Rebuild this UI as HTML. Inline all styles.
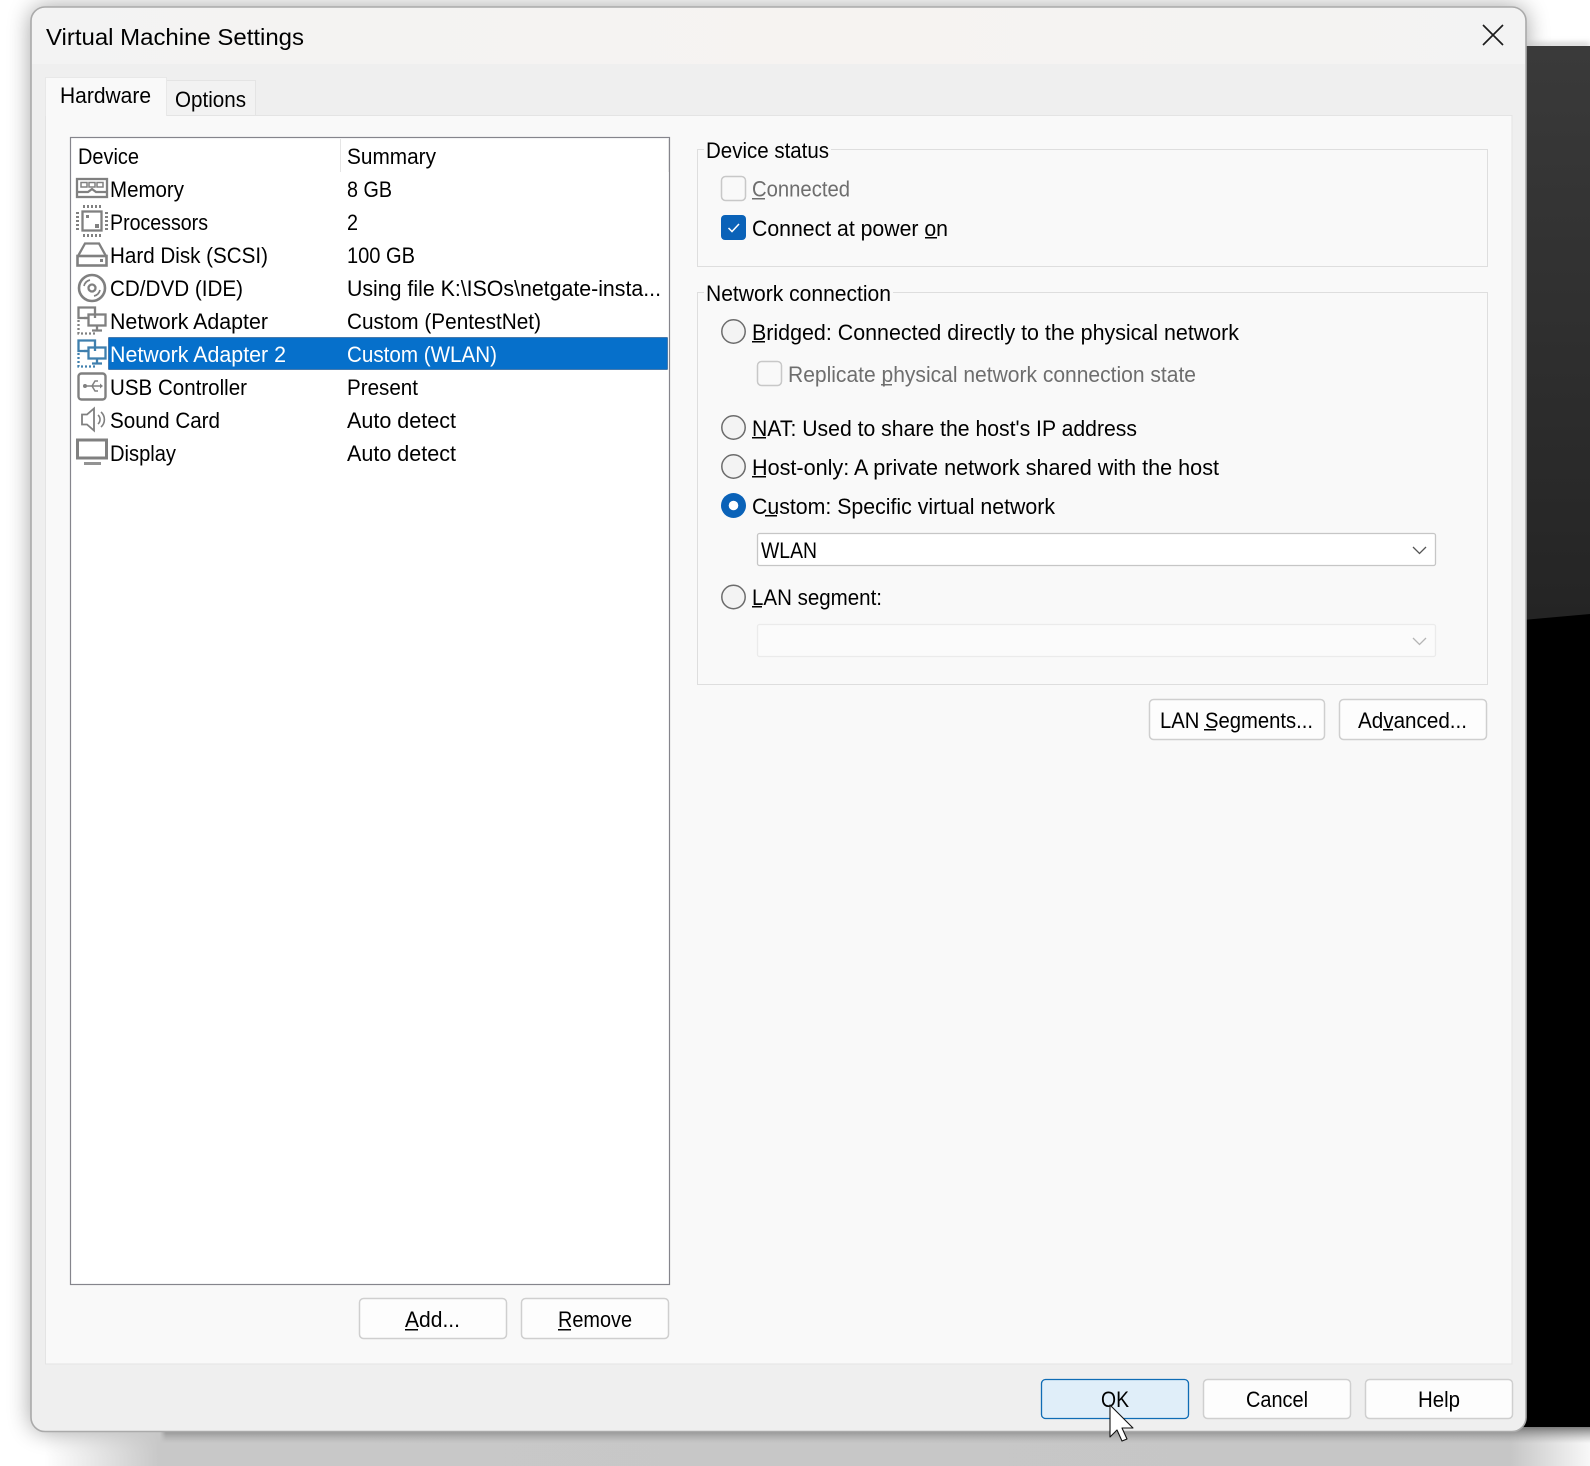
<!DOCTYPE html>
<html><head><meta charset="utf-8"><title>Virtual Machine Settings</title>
<style>
html,body{margin:0;padding:0;background:#fff;width:1590px;height:1466px;overflow:hidden}
svg{display:block}
text{font-family:"Liberation Sans",sans-serif;font-size:22px;fill:#000}
.d{fill:#6e6e6e}
.w{fill:#fff}
.btn{fill:#fdfdfd;stroke:#cfcfcf;stroke-width:1.5}
.ic{fill:none;stroke:#808080;stroke-width:2.3}
.icb{fill:none;stroke:#3f7fae;stroke-width:2.3}
.f{fill:#808080}
</style></head><body>
<svg width="1590" height="1466" viewBox="0 0 1590 1466" xmlns="http://www.w3.org/2000/svg">
<defs>
<filter id="b1" filterUnits="userSpaceOnUse" x="0" y="0" width="1590" height="1466"><feGaussianBlur stdDeviation="12"/></filter>
<filter id="b2" filterUnits="userSpaceOnUse" x="0" y="0" width="1590" height="1466"><feGaussianBlur stdDeviation="3"/></filter>
<linearGradient id="dk" x1="0" y1="0" x2="0" y2="1"><stop offset="0" stop-color="#3a3a3a"/><stop offset="1" stop-color="#242424"/></linearGradient>
<linearGradient id="band" x1="0" y1="0" x2="0" y2="1"><stop offset="0" stop-color="#6e6e6e" stop-opacity=".9"/><stop offset="1" stop-color="#999" stop-opacity="0"/></linearGradient>
<linearGradient id="under" gradientUnits="userSpaceOnUse" x1="0" y1="0" x2="1590" y2="0"><stop offset=".028" stop-color="#c8c8c8" stop-opacity="0"/><stop offset=".1" stop-color="#c8c8c8"/><stop offset=".95" stop-color="#c6c6c6"/><stop offset="1" stop-color="#f8f8f8"/></linearGradient>
<mask id="bm" maskUnits="userSpaceOnUse" x="100" y="1420" width="1490" height="40"><rect x="100" y="1420" width="120" height="40" fill="url(#mk)"/><rect x="220" y="1420" width="1370" height="40" fill="#fff"/></mask>
<linearGradient id="mk" x1="0" y1="0" x2="1" y2="0"><stop offset="0" stop-color="#000"/><stop offset=".5" stop-color="#000"/><stop offset=".55" stop-color="#fff"/></linearGradient>
<linearGradient id="tb" x1="0" y1="0" x2="1" y2="0"><stop offset="0" stop-color="#f3f3f3"/><stop offset=".55" stop-color="#f6f3f1"/><stop offset="1" stop-color="#f3f3f3"/></linearGradient>
<clipPath id="win"><rect x="31" y="7" width="1495" height="1424.500" rx="14"/></clipPath>
</defs>

<!-- backdrop -->
<rect width="1590" height="1466" fill="#fff"/>
<rect x="31" y="7" width="1495" height="1424" rx="14" fill="#000" opacity=".38" filter="url(#b1)"/>
<rect x="0" y="1420" width="1590" height="46" fill="url(#under)"/>
<rect x="100" y="1427" width="1490" height="16" fill="url(#band)" mask="url(#bm)"/>
<!-- dark window behind -->
<rect x="1500" y="43" width="90" height="4" fill="#c4c4c4" filter="url(#b2)"/>
<rect x="1500" y="46" width="90" height="1381" fill="#000"/>
<path d="M1500 46H1590V614L1500 622Z" fill="url(#dk)"/>

<!-- window -->
<rect x="31" y="7" width="1495" height="1424.500" rx="14" fill="#efefef"/>
<g clip-path="url(#win)"><rect x="31" y="7" width="1495" height="57" fill="url(#tb)"/></g>
<rect x="31" y="7" width="1495" height="1424.500" rx="14" fill="none" stroke="#aaaaaa" stroke-width="1.600"/>

<text x="46" y="45" style="font-size:23px" textLength="258" lengthAdjust="spacingAndGlyphs">Virtual Machine Settings</text>
<path d="M1483 25L1503 45M1503 25L1483 45" stroke="#1c1c1c" stroke-width="1.700" fill="none"/>

<!-- tabs & panel -->
<rect x="166.500" y="80.500" width="89" height="40" fill="#f2f2f2" stroke="#e4e4e4"/>
<rect x="45.500" y="115.500" width="1466.500" height="1248.500" fill="#f9f9f9" stroke="#e4e4e4"/>
<path d="M45.500 116V77.500H166.500V116" fill="#f9f9f9" stroke="#e8e8e8"/>
<rect x="46" y="112" width="120" height="6" fill="#f9f9f9"/>
<text x="60" y="103" textLength="91" lengthAdjust="spacingAndGlyphs">Hardware</text>
<text x="175" y="107" textLength="71" lengthAdjust="spacingAndGlyphs">Options</text>

<!-- list -->
<rect x="70.500" y="137.500" width="599" height="1147" fill="#fff" stroke="#85858c" stroke-width="1.200"/>
<rect x="340" y="139" width="1" height="33" fill="#e5e5e5"/>
<rect x="668" y="139" width="1" height="33" fill="#e5e5e5"/>
<text x="78" y="164" textLength="61" lengthAdjust="spacingAndGlyphs">Device</text>
<text x="347" y="164" textLength="89" lengthAdjust="spacingAndGlyphs">Summary</text>

<rect x="108.500" y="337.500" width="559" height="32" fill="#0670cb" stroke="#0b3f78" stroke-dasharray="1 1"/>

<text x="110" y="197" textLength="74" lengthAdjust="spacingAndGlyphs">Memory</text>
<text x="347" y="197" textLength="45" lengthAdjust="spacingAndGlyphs">8 GB</text>
<text x="110" y="230" textLength="98" lengthAdjust="spacingAndGlyphs">Processors</text>
<text x="347" y="230" textLength="11" lengthAdjust="spacingAndGlyphs">2</text>
<text x="110" y="263" textLength="158" lengthAdjust="spacingAndGlyphs">Hard Disk (SCSI)</text>
<text x="347" y="263" textLength="68" lengthAdjust="spacingAndGlyphs">100 GB</text>
<text x="110" y="296" textLength="133" lengthAdjust="spacingAndGlyphs">CD/DVD (IDE)</text>
<text x="347" y="296" textLength="314" lengthAdjust="spacingAndGlyphs">Using file K:\ISOs\netgate-insta...</text>
<text x="110" y="329" textLength="158" lengthAdjust="spacingAndGlyphs">Network Adapter</text>
<text x="347" y="329" textLength="194" lengthAdjust="spacingAndGlyphs">Custom (PentestNet)</text>
<text x="110" y="362" class="w" textLength="176" lengthAdjust="spacingAndGlyphs">Network Adapter 2</text>
<text x="347" y="362" class="w" textLength="150" lengthAdjust="spacingAndGlyphs">Custom (WLAN)</text>
<text x="110" y="395" textLength="137" lengthAdjust="spacingAndGlyphs">USB Controller</text>
<text x="347" y="395" textLength="71" lengthAdjust="spacingAndGlyphs">Present</text>
<text x="110" y="428" textLength="110" lengthAdjust="spacingAndGlyphs">Sound Card</text>
<text x="347" y="428" textLength="109" lengthAdjust="spacingAndGlyphs">Auto detect</text>
<text x="110" y="461" textLength="66" lengthAdjust="spacingAndGlyphs">Display</text>
<text x="347" y="461" textLength="109" lengthAdjust="spacingAndGlyphs">Auto detect</text>

<!-- icons -->
<!-- memory -->
<rect x="77" y="179" width="30" height="18" class="ic"/>
<path d="M77 192H88L92 189L96 192H107" class="ic"/>
<rect x="81" y="182.500" width="6" height="4.500" class="ic" style="stroke-width:1.500"/><rect x="89" y="182.500" width="6" height="4.500" class="ic" style="stroke-width:1.500"/><rect x="97" y="182.500" width="6" height="4.500" class="ic" style="stroke-width:1.500"/>
<!-- cpu -->
<rect x="82.500" y="211.500" width="19" height="19" class="ic"/>
<path d="M83 206.500H101M83 235.500H101M77.500 212V230M106.500 212V230" fill="none" stroke="#808080" stroke-width="3" stroke-dasharray="2 2"/>
<rect x="86" y="215" width="3" height="3" class="f"/><rect x="95" y="224" width="4" height="4" class="f"/>
<!-- hdd -->
<path d="M77.500 257L85 243.500H99L106.500 257" class="ic"/>
<rect x="77.500" y="256" width="29" height="9.500" class="ic" style="stroke-width:2.600"/>
<rect x="100" y="259" width="3" height="3" class="f"/>
<!-- cd -->
<circle cx="92" cy="288" r="13" class="ic" style="stroke-width:2.600"/>
<circle cx="92" cy="288" r="3.500" class="ic"/>
<path d="M84 286A8 8 0 0 1 90 280M100 290A8 8 0 0 1 94 296" class="ic" style="stroke-width:1.700"/>
<!-- net -->
<g class="ic">
<path d="M95 318V307.500H78.500V318H88"/>
<rect x="88.500" y="314.500" width="17" height="11"/>
<path d="M97 326V330M92 330.500H102M87 318H84"/>
<path d="M78.500 320V333.500H96" stroke-dasharray="2 2"/>
</g>
<g class="icb">
<path d="M95 351V340.500H78.500V351H88"/>
<rect x="88.500" y="347.500" width="17" height="11"/>
<path d="M97 359V363M92 363.500H102M87 351H84"/>
<path d="M78.500 353V366.500H96" stroke-dasharray="2 2"/>
</g>
<!-- usb -->
<rect x="78.500" y="373.500" width="27" height="26" rx="3" class="ic" style="stroke-width:2.400"/>
<path d="M85 386H101M92 386L95 381H98M92 386L95 391H98" class="ic" style="stroke-width:1.500"/>
<circle cx="85" cy="386" r="2" class="f"/><path d="M100 383.500L103 386L100 388.500Z" class="f"/>
<!-- sound -->
<path d="M82 414.500H87L94 408.500V430.500L87 424.500H82Z" class="ic" style="stroke-width:1.800"/>
<path d="M98 415A6 6 0 0 1 98 424M101 412A10 10 0 0 1 101 427" class="ic" style="stroke-width:1.600"/>
<!-- display -->
<rect x="77.500" y="440" width="29" height="18" class="ic" style="stroke-width:3"/>
<rect x="84" y="462" width="17" height="3" class="f" opacity=".85"/>

<!-- Add / Remove -->
<rect x="359.500" y="1298.500" width="147" height="40" rx="4" class="btn"/>
<rect x="521.500" y="1298.500" width="147" height="40" rx="4" class="btn"/>
<text x="405" y="1327" textLength="55" lengthAdjust="spacingAndGlyphs">Add...</text>
<rect x="405" y="1329" width="13" height="1.500"/>
<text x="558" y="1327" textLength="74" lengthAdjust="spacingAndGlyphs">Remove</text>
<rect x="558" y="1329" width="13" height="1.500"/>

<!-- Device status -->
<rect x="697.500" y="149.500" width="790" height="117" fill="none" stroke="#dedede"/>
<rect x="704" y="145" width="127" height="10" fill="#f9f9f9"/>
<text x="706" y="158" textLength="123" lengthAdjust="spacingAndGlyphs">Device status</text>

<rect x="721.500" y="176.500" width="24" height="24" rx="4" fill="#f9f9f9" stroke="#c8c8c8" stroke-width="1.500"/>
<text x="752" y="196.500" class="d" textLength="98" lengthAdjust="spacingAndGlyphs">Connected</text>
<rect x="752" y="198" width="13" height="1.500" fill="#6e6e6e"/>

<rect x="721" y="215" width="25" height="25" rx="4" fill="#0a62b8"/>
<path d="M728.500 228L732 231.500L739 224" fill="none" stroke="#fff" stroke-width="1.500"/>
<text x="752" y="236" textLength="196" lengthAdjust="spacingAndGlyphs">Connect at power on</text>
<rect x="925" y="237" width="12" height="1.500"/>

<!-- Network connection -->
<rect x="697.500" y="292.500" width="790" height="392" fill="none" stroke="#dedede"/>
<rect x="704" y="288" width="189" height="10" fill="#f9f9f9"/>
<text x="706" y="301" textLength="185" lengthAdjust="spacingAndGlyphs">Network connection</text>

<circle cx="733.500" cy="331.500" r="11.700" fill="#f3f3f3" stroke="#6c6c6c" stroke-width="1.500"/>
<text x="752" y="340" textLength="487" lengthAdjust="spacingAndGlyphs">Bridged: Connected directly to the physical network</text>
<rect x="752" y="341" width="13" height="1.500"/>

<rect x="757.500" y="361.500" width="24" height="24" rx="4" fill="#f9f9f9" stroke="#c8c8c8" stroke-width="1.500"/>
<text x="788" y="382" class="d" textLength="408" lengthAdjust="spacingAndGlyphs">Replicate physical network connection state</text>
<rect x="881" y="384" width="11" height="1.500" fill="#6e6e6e"/>

<circle cx="733.500" cy="427.500" r="11.700" fill="#f3f3f3" stroke="#6c6c6c" stroke-width="1.500"/>
<text x="752" y="436" textLength="385" lengthAdjust="spacingAndGlyphs">NAT: Used to share the host's IP address</text>
<rect x="752" y="437" width="14" height="1.500"/>

<circle cx="733.500" cy="466.500" r="11.700" fill="#f3f3f3" stroke="#6c6c6c" stroke-width="1.500"/>
<text x="752" y="475" textLength="467" lengthAdjust="spacingAndGlyphs">Host-only: A private network shared with the host</text>
<rect x="752" y="476" width="14" height="1.500"/>

<circle cx="733.500" cy="505.500" r="12.500" fill="#0a62b8"/>
<circle cx="733.500" cy="505.500" r="4.800" fill="#fff"/>
<text x="752" y="514" textLength="303" lengthAdjust="spacingAndGlyphs">Custom: Specific virtual network</text>
<rect x="765" y="515" width="12" height="1.500"/>

<rect x="757.500" y="533.500" width="678" height="32" rx="2" fill="#fff" stroke="#c6c6c6" stroke-width="1.300"/>
<text x="761" y="558" textLength="56" lengthAdjust="spacingAndGlyphs">WLAN</text>
<path d="M1413 547L1419.500 553.500L1426 547" fill="none" stroke="#555" stroke-width="1.300"/>

<circle cx="733.500" cy="597" r="11.700" fill="#f3f3f3" stroke="#6c6c6c" stroke-width="1.500"/>
<text x="752" y="605" textLength="130" lengthAdjust="spacingAndGlyphs">LAN segment:</text>
<rect x="752" y="606" width="10" height="1.500"/>

<rect x="757.500" y="624.500" width="678" height="32" rx="2" fill="#fbfbfb" stroke="#ebebeb" stroke-width="1.300"/>
<path d="M1413 638L1419.500 644.500L1426 638" fill="none" stroke="#b5b5b5" stroke-width="1.300"/>

<!-- LAN Segments / Advanced -->
<rect x="1149.500" y="699.500" width="175" height="40" rx="4" class="btn"/>
<rect x="1339.500" y="699.500" width="147" height="40" rx="4" class="btn"/>
<text x="1160" y="728" textLength="153" lengthAdjust="spacingAndGlyphs">LAN Segments...</text>
<rect x="1204" y="729" width="12" height="1.500"/>
<text x="1358" y="728" textLength="109" lengthAdjust="spacingAndGlyphs">Advanced...</text>
<rect x="1383" y="729" width="10" height="1.500"/>

<!-- OK / Cancel / Help -->
<rect x="1041.500" y="1379.500" width="147" height="39" rx="4" fill="#e0eef9" stroke="#0f6cb5" stroke-width="1.300"/>
<rect x="1203.500" y="1379.500" width="147" height="39" rx="4" class="btn"/>
<rect x="1365.500" y="1379.500" width="147" height="39" rx="4" class="btn"/>
<text x="1101" y="1407" textLength="28" lengthAdjust="spacingAndGlyphs">OK</text>
<text x="1246" y="1407" textLength="62" lengthAdjust="spacingAndGlyphs">Cancel</text>
<text x="1418" y="1407" textLength="42" lengthAdjust="spacingAndGlyphs">Help</text>

<!-- cursor -->
<path d="M1110 1405V1437L1117 1430L1122 1441L1127 1439L1122 1428H1133Z" fill="#fff" stroke="#111" stroke-width="1.100" stroke-linejoin="round"/>
</svg>
</body></html>
